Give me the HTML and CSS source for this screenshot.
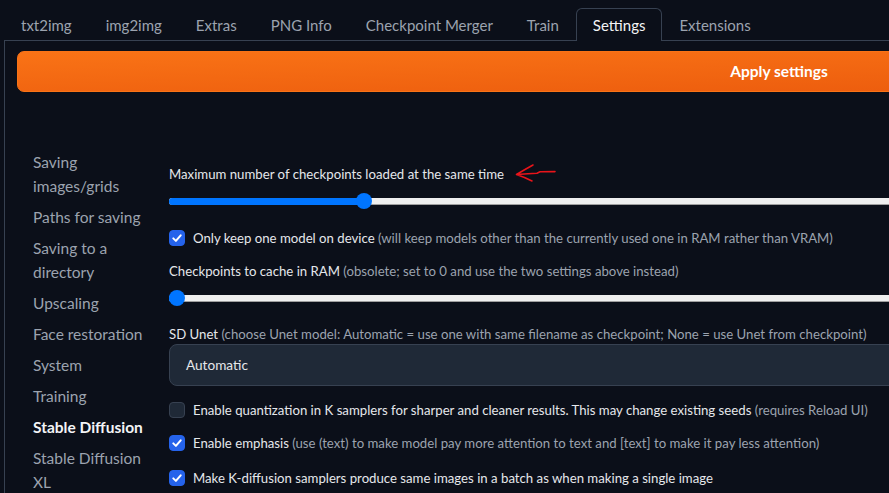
FILE: index.html
```html
<!DOCTYPE html>
<html>
<head>
<meta charset="utf-8">
<link rel="stylesheet" href="styles.css">
</head>
<body>
<div class="app">
  <div class="tabs">
    <div class="tab-nav">
      <div class="tab">txt2img</div>
      <div class="tab">img2img</div>
      <div class="tab">Extras</div>
      <div class="tab">PNG Info</div>
      <div class="tab">Checkpoint Merger</div>
      <div class="tab">Train</div>
      <div class="tab selected">Settings</div>
      <div class="tab">Extensions</div>
    </div>
    <div class="panel">
      <div class="apply">Apply settings</div>
      <div class="settings">
        <div class="side">
          <div class="side-item">Saving images/grids</div>
          <div class="side-item">Paths for saving</div>
          <div class="side-item">Saving to a directory</div>
          <div class="side-item">Upscaling</div>
          <div class="side-item">Face restoration</div>
          <div class="side-item">System</div>
          <div class="side-item">Training</div>
          <div class="side-item active">Stable Diffusion</div>
          <div class="side-item">Stable Diffusion XL</div>
        </div>
        <div class="main">
          <div class="label first">Maximum number of checkpoints loaded at the same time<svg class="arrow" width="42" height="20" viewBox="0 0 42 20"><path d="M18 2 Q9 7 1.5 11.5 Q9 14 17 18 M1.5 11.5 L13 10.8 L22 10.2 L25 8.8 L40 8.6" fill="none" stroke="#e8141a" stroke-width="1.6" stroke-linecap="round" stroke-linejoin="round"/></svg></div>
          <div class="slider s1">
            <div class="track"><div class="fill" style="width:195px"></div></div>
            <div class="thumb" style="left:187px"></div>
          </div>
          <div class="check-row r1">
            <span class="box on"><svg width="16" height="16" viewBox="0 0 16 16"><path d="M4.3 8.4 L6.9 10.9 L11.7 5.3" fill="none" stroke="#fff" stroke-width="2" stroke-linecap="round" stroke-linejoin="round"/></svg></span>
            <span class="text">Only keep one model on device <span class="info">(will keep models other than the currently used one in RAM rather than VRAM)</span></span>
          </div>
          <div class="label l2">Checkpoints to cache in RAM <span class="info">(obsolete; set to 0 and use the two settings above instead)</span></div>
          <div class="slider s2">
            <div class="track"><div class="fill" style="width:8px"></div></div>
            <div class="thumb" style="left:0px"></div>
          </div>
          <div class="label l3">SD Unet <span class="info">(choose Unet model: Automatic = use one with same filename as checkpoint; None = use Unet from checkpoint)</span></div>
          <div class="dropdown">Automatic</div>
          <div class="check-row r2">
            <span class="box"></span>
            <span class="text">Enable quantization in K samplers for sharper and cleaner results. This may change existing seeds <span class="info">(requires Reload UI)</span></span>
          </div>
          <div class="check-row r3">
            <span class="box on"><svg width="16" height="16" viewBox="0 0 16 16"><path d="M4.3 8.4 L6.9 10.9 L11.7 5.3" fill="none" stroke="#fff" stroke-width="2" stroke-linecap="round" stroke-linejoin="round"/></svg></span>
            <span class="text">Enable emphasis <span class="info">(use (text) to make model pay more attention to text and [text] to make it pay less attention)</span></span>
          </div>
          <div class="check-row r4">
            <span class="box on"><svg width="16" height="16" viewBox="0 0 16 16"><path d="M4.3 8.4 L6.9 10.9 L11.7 5.3" fill="none" stroke="#fff" stroke-width="2" stroke-linecap="round" stroke-linejoin="round"/></svg></span>
            <span class="text">Make K-diffusion samplers produce same images in a batch as when making a single image</span>
          </div>
        </div>
      </div>
    </div>
  </div>
</div>
</body>
</html>
```
FILE: styles.css
```css
html, body {
  margin: 0;
  padding: 0;
  background: #0b0f19;
  overflow: hidden;
}
body {
  width: 889px;
  height: 493px;
  font-family: Lato, "Liberation Sans", sans-serif;
  color: #e5e7eb;
}
.app {
  width: 1560px;
  padding-left: 4px;
}
.tabs {
  width: 1549px;
}
.tab-nav {
  display: flex;
  padding-top: 8px;
  border-bottom: 1px solid #374151;
}
.tab {
  height: 30px;
  line-height: 30px;
  padding: 1px 16px 0 16px;
  font-size: 15px;
  color: #9ca3af;
  border: 1px solid transparent;
  border-bottom: none;
  white-space: nowrap;
}
.tab.selected {
  color: #f3f4f6;
  border-color: #374151;
  border-radius: 6px 6px 0 0;
  background: #0b0f19;
  margin-bottom: -1px;
  height: 31px;
}
.panel {
  border-left: 1px solid #374151;
  padding: 10px 12px 0 12px;
  height: 460px;
}
.apply {
  height: 39px;
  line-height: 39px;
  border: 1px solid #f97316;
  border-radius: 7px;
  background: linear-gradient(to bottom right, #f97316, #ea580c);
  color: #fff;
  font-weight: 700;
  font-size: 15.5px;
  text-align: center;
}
.settings {
  display: flex;
  margin-top: 58px;
}
.side {
  width: 152px;
  flex: none;
  box-sizing: border-box;
  padding: 0 10px 0 16px;
  display: flex;
  flex-direction: column;
  gap: 7px;
}
.side-item {
  font-size: 15.5px;
  line-height: 24px;
  color: #9ca3af;
}
.side-item.active {
  color: #f3f4f6;
  font-weight: 700;
}
.main {
  flex: 1;
  display: flex;
  flex-direction: column;
  font-size: 13.2px;
}
.label {
  line-height: 20px;
  white-space: nowrap;
  color: #e5e7eb;
}
.label.first { margin-top: 14px; }
.arrow {
  vertical-align: middle;
  margin-left: 11px;
  margin-top: -6px;
}
.info { color: #9ca3af; }
.slider {
  position: relative;
  height: 16px;
}
.s1 { margin-top: 9px; }
.s2 { margin-top: 9px; }
.track {
  position: absolute;
  left: 0;
  right: 0;
  top: 5px;
  height: 6px;
  background: #efefef;
  border-bottom: 1px solid #9f9f9f;
  border-radius: 3px 0 0 3px;
}
.fill {
  height: 7px;
  background: #0075ff;
  border-radius: 3px 0 0 3px;
}
.thumb {
  position: absolute;
  top: 0;
  width: 16px;
  height: 16px;
  border-radius: 50%;
  background: #0075ff;
}
.check-row {
  display: flex;
  align-items: center;
  height: 20px;
  white-space: nowrap;
}
.r1 { margin-top: 19px; }
.r2 { margin-top: 14px; }
.r3 { margin-top: 13px; }
.r4 { margin-top: 15px; }
.box {
  flex: none;
  width: 16px;
  height: 16px;
  box-sizing: border-box;
  border-radius: 4px;
  border: 1px solid #374151;
  background: #1f2937;
  margin-right: 8px;
  display: flex;
}
.box.on {
  background: #2563eb;
  border-color: #2563eb;
}
.box svg { margin: -1px; }
.l2 { margin-top: 13px; }
.l3 { margin-top: 18px; }
.dropdown {
  height: 40px;
  line-height: 40px;
  border: 1px solid #374151;
  border-radius: 8px;
  background: #1f2937;
  padding-left: 16px;
  font-size: 13.6px;
  color: #e5e7eb;
}
```
